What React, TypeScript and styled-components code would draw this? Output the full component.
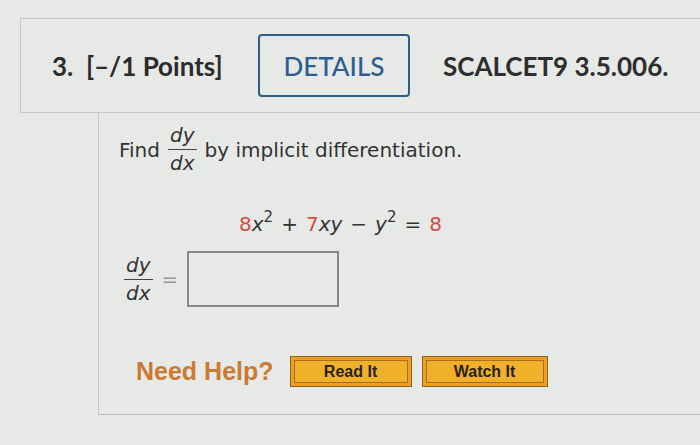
import styled, { createGlobalStyle } from "styled-components";

const Global = createGlobalStyle`
  html, body {
    margin: 0;
    padding: 0;
    background: #e7e9e7;
  }
  body {
    width: 700px;
    height: 445px;
    overflow: hidden;
    font-family: "DejaVu Sans", Verdana, sans-serif;
  }
`;

const Frac = ({ top, bottom }: { top: string; bottom: string }) => (
  <Fraction>
    <Num>{top}</Num>
    <Den>{bottom}</Den>
  </Fraction>
);

const App = () => {
  return (
    <>
      <Global />
      <Page>
        <Header>
          <Points>3.&nbsp; [–/1 Points]</Points>
          <DetailsButton>DETAILS</DetailsButton>
          <Code>SCALCET9 3.5.006.</Code>
        </Header>
        <Content>
          <Prompt>
            <span>Find</span>
            <Frac top="dy" bottom="dx" />
            <span>by implicit differentiation.</span>
          </Prompt>
          <Equation>
            <Red>8</Red>
            <Var>x</Var>
            <Sup>2</Sup>
            <Op>+</Op>
            <Red>7</Red>
            <Var>xy</Var>
            <Op>−</Op>
            <Var>y</Var>
            <Sup>2</Sup>
            <Op>=</Op>
            <Red>8</Red>
          </Equation>
          <AnswerRow>
            <Frac top="dy" bottom="dx" />
            <Equals>=</Equals>
            <AnswerBox />
          </AnswerRow>
          <HelpRow>
            <HelpLabel>Need Help?</HelpLabel>
            <HelpButton $w={122}>
              <span>Read It</span>
            </HelpButton>
            <HelpButton $w={126}>
              <span>Watch It</span>
            </HelpButton>
          </HelpRow>
        </Content>
      </Page>
    </>
  );
};

export default App;

const Page = styled.div`
  padding: 18px 0 0 20px;
`;

const Header = styled.div`
  height: 93px;
  border: 1px solid #c4c7c4;
  border-right: none;
  display: flex;
  align-items: center;
  padding-left: 31px;
  font-family: "Lato", "Open Sans", sans-serif;
  font-size: 26px;
  color: #2b2b2b;
`;

const Points = styled.div`
  font-weight: 700;
  width: 206px;
`;

const DetailsButton = styled.div`
  width: 148px;
  height: 59px;
  border: 2px solid #2f5d8a;
  border-radius: 4px;
  display: flex;
  align-items: center;
  justify-content: center;
  color: #2c5d93;
  font-weight: 500;
  margin-right: 33px;
`;

const Code = styled.div`
  font-weight: 700;
  color: #2e2e2e;
`;

const Content = styled.div`
  margin-left: 78px;
  height: 290px;
  border-left: 1px solid #c4c7c4;
  border-bottom: 1px solid #b9bcb9;
  padding: 11px 0 0 20px;
  color: #333;
  font-size: 20px;
`;

const Prompt = styled.div`
  display: flex;
  align-items: center;
  gap: 8px;
`;

const Fraction = styled.span`
  display: inline-flex;
  flex-direction: column;
  align-items: center;
  font-style: italic;
  line-height: 23px;
`;

const Num = styled.span`
  padding: 0 2px 2px;
  border-bottom: 1px solid #444;
`;

const Den = styled.span`
  padding: 2px 2px 0;
`;

const Equation = styled.div`
  margin: 37px 0 0 120px;
  line-height: 24px;
  white-space: nowrap;
`;

const Var = styled.span`
  font-style: italic;
`;

const Red = styled.span`
  color: #d64c3c;
`;

const Sup = styled.span`
  font-size: 15px;
  position: relative;
  top: -9px;
`;

const Op = styled.span`
  padding: 0 8px;
`;

const AnswerRow = styled.div`
  margin: 13px 0 0 5px;
  display: flex;
  align-items: center;
`;

const Equals = styled.span`
  color: #9a9a9a;
  margin: 0 9px 0 9px;
`;

const AnswerBox = styled.div`
  width: 148px;
  height: 52px;
  border: 2px solid #858885;
`;

const HelpRow = styled.div`
  margin: 49px 0 0 17px;
  display: flex;
  align-items: center;
  gap: 10px;
`;

const HelpLabel = styled.span`
  font-family: "Liberation Sans", Arial, sans-serif;
  font-weight: 700;
  font-size: 25px;
  color: #cc7a32;
  margin-right: 6px;
`;

const HelpButton = styled.div<{ $w: number }>`
  width: ${(p) => p.$w}px;
  height: 31px;
  box-sizing: border-box;
  border: 1px solid #8d6420;
  background: #e9a023;
  padding: 3px;
  span {
    display: flex;
    height: 100%;
    box-sizing: border-box;
    align-items: center;
    justify-content: center;
    border: 1px solid #a8701c;
    background: #efb02a;
    font-family: "Liberation Sans", Arial, sans-serif;
    font-weight: 700;
    font-size: 16px;
    color: #2a2210;
  }
`;
